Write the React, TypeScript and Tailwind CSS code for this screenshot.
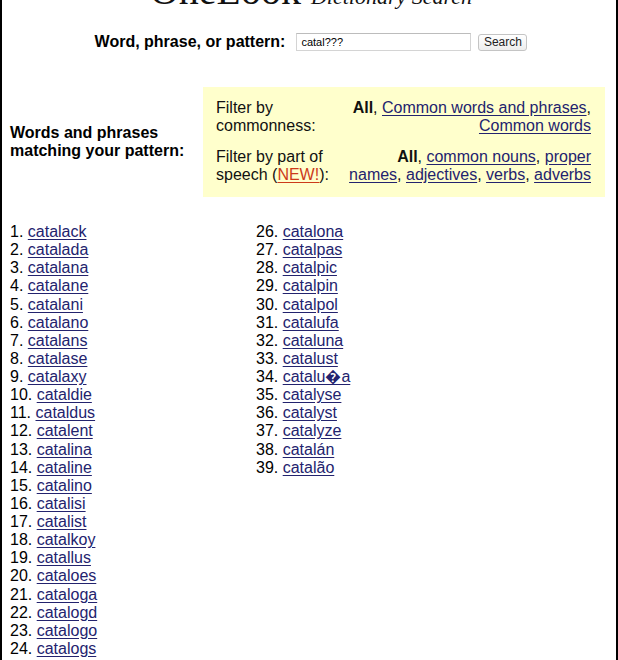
const LEFT = [
  "catalack", "catalada", "catalana", "catalane", "catalani", "catalano", "catalans", "catalase",
  "catalaxy", "cataldie", "cataldus", "catalent", "catalina", "cataline", "catalino", "catalisi",
  "catalist", "catalkoy", "catallus", "cataloes", "cataloga", "catalogd", "catalogo", "catalogs",
];

const RIGHT = [
  "catalona", "catalpas", "catalpic", "catalpin", "catalpol", "catalufa", "cataluna", "catalust",
  "catalu\uFFFDa", "catalyse", "catalyst", "catalyze", "catalán", "catalão",
];

function Link({ children }: { children: React.ReactNode }) {
  return <a className="text-[#23236e] underline underline-offset-2 cursor-pointer">{children}</a>;
}

function WordColumn({ words, start, className }: { words: string[]; start: number; className: string }) {
  return (
    <div className={className}>
      {words.map((w, i) => (
        <div key={w} className="whitespace-nowrap">
          {start + i}. <Link>{w}</Link>
        </div>
      ))}
    </div>
  );
}

export default function App() {
  return (
    <div className="h-[660px] w-[618px] overflow-hidden border-x-2 border-black bg-white font-['Liberation_Sans',Arial,sans-serif] text-black">
      {/* logo, cut off by the top of the window */}
      <div className="-mt-[29px] flex h-[40px] items-baseline justify-center gap-[10px] pl-[4px] font-['Liberation_Serif','Times_New_Roman',serif] text-[#111]">
        <span className="text-[40px] leading-[40px]">OneLook</span>
        <span className="text-[22px] italic leading-[22px]">Dictionary Search</span>
      </div>

      <div className="mt-[21px] flex h-[20px] items-center justify-center pl-[4px]">
        <span className="text-[16px] font-bold">Word, phrase, or pattern:</span>
        <div className="ml-[11px] flex h-[18px] w-[175px] items-center border border-[#d4d4d4] border-t-[#bcbcbc] bg-white pl-[4px] text-[11px]">
          catal???
        </div>
        <button className="ml-[7px] h-[17px] w-[49px] rounded-[3px] border border-[#c4c4c4] bg-gradient-to-b from-white to-[#ededed] text-[12px] leading-none text-[#222]">
          Search
        </button>
      </div>

      <div className="mt-[35px] flex items-center">
        <div className="w-[201px] pl-[8px] text-[16px] font-bold leading-[18px]">
          Words and phrases
          <br />
          matching your pattern:
        </div>
        <div className="w-[402px] bg-[#ffffcc] pb-[13px] pl-[13px] pr-[14px] pt-[12px] text-[16px] leading-[18px] text-[#111]">
          <div className="grid grid-cols-[120px_1fr] gap-x-[10px] gap-y-[13px]">
            <div>
              Filter by
              <br />
              commonness:
            </div>
            <div className="text-right">
              <b>All</b>, <Link>Common words and phrases</Link>, <Link>Common words</Link>
            </div>
            <div>
              Filter by part of
              <br />
              speech (<a className="text-[#cc3a1a] underline underline-offset-2">NEW!</a>):
            </div>
            <div className="text-right">
              <b>All</b>, <Link>common nouns</Link>, <Link>proper names</Link>, <Link>adjectives</Link>,{" "}
              <Link>verbs</Link>, <Link>adverbs</Link>
            </div>
          </div>
        </div>
      </div>

      <div className="mt-[26px] flex text-[16px] leading-[18.13px]">
        <WordColumn words={LEFT} start={1} className="w-[254px] pl-[8px]" />
        <WordColumn words={RIGHT} start={26} className="" />
      </div>
    </div>
  );
}
